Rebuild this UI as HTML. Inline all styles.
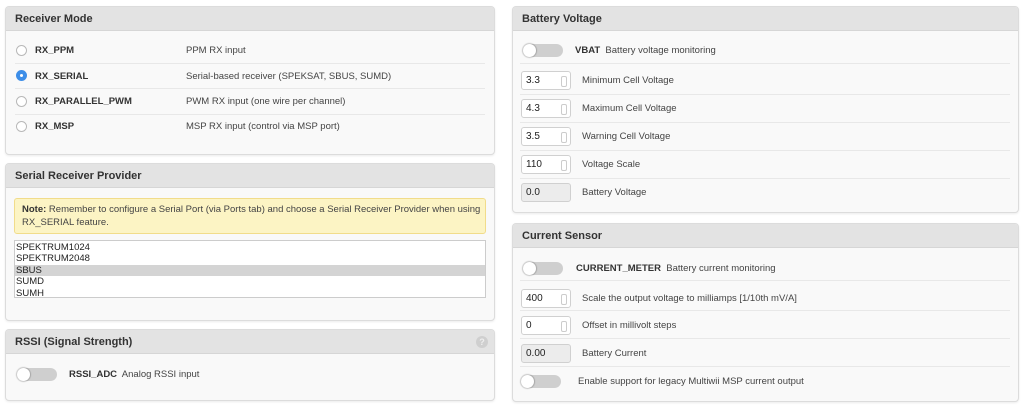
<!DOCTYPE html>
<html><head><meta charset="utf-8"><style>
*{box-sizing:border-box;margin:0;padding:0}
body{width:1024px;height:409px;background:#fff;font-family:"Liberation Sans",sans-serif;font-size:9.5px;color:#444;position:relative;overflow:hidden}
.a{position:absolute;white-space:nowrap}
.panel{position:absolute;background:#f9f9f9;border:1px solid #dcdcdc;border-radius:4px;box-shadow:0 1px 2px rgba(0,0,0,.08);overflow:hidden}
.hd{position:absolute;left:0;right:0;top:0;height:24px;background:#e3e3e3;border-bottom:1px solid #d6d6d6;font-weight:bold;font-size:11px;color:#333;padding:6px 0 0 9px}
.sep{position:absolute;height:1px;background:#e8e8e8}
.radio{position:absolute;width:11px;height:11px;border-radius:50%;border:1px solid #b8b8b8;background:#fff}
.radio.on{background:#3d8ee8;border-color:#3d8ee8}
.radio.on:after{content:"";position:absolute;left:3px;top:3px;width:3px;height:3px;border-radius:50%;background:#fff}
.b{font-weight:bold;color:#333;font-size:9.5px}
.tog{position:absolute;width:40px;height:13px;border-radius:7px;background:#cfcfcf}
.tog:after{content:"";position:absolute;left:0;top:0;width:13px;height:13px;border-radius:50%;background:#fff;box-shadow:0 0 1px 1px rgba(0,0,0,.2)}
.inp{position:absolute;width:50px;height:19px;border:1px solid #d0d0d0;border-radius:3px;background:#fff;padding:3px 0 0 4px;font-size:10px;color:#222}
.inp:after{content:"";position:absolute;right:3px;top:4px;width:4px;height:9px;border:1px solid #ccc;border-radius:2px}
.inp.ro{background:#ececec}
.inp.ro:after{display:none}
</style></head><body>

<div class="panel" style="left:5px;top:6px;width:490px;height:149px">
<div class="hd">Receiver Mode</div>
</div>
<div class="radio" style="left:16px;top:45px"></div><div class="a b" style="left:35px;top:45px">RX_PPM</div><div class="a" style="left:186px;top:45px">PPM RX input</div>
<div class="sep" style="left:15px;width:470px;top:63px"></div>
<div class="radio on" style="left:16px;top:70px"></div><div class="a b" style="left:35px;top:71px">RX_SERIAL</div><div class="a" style="left:186px;top:71px">Serial-based receiver (SPEKSAT, SBUS, SUMD)</div>
<div class="sep" style="left:15px;width:470px;top:88px"></div>
<div class="radio" style="left:16px;top:96px"></div><div class="a b" style="left:35px;top:96px">RX_PARALLEL_PWM</div><div class="a" style="left:186px;top:96px">PWM RX input (one wire per channel)</div>
<div class="sep" style="left:15px;width:470px;top:114px"></div>
<div class="radio" style="left:16px;top:121px"></div><div class="a b" style="left:35px;top:121px">RX_MSP</div><div class="a" style="left:186px;top:121px">MSP RX input (control via MSP port)</div>

<div class="panel" style="left:5px;top:163px;width:490px;height:158px">
<div class="hd">Serial Receiver Provider</div>
</div>
<div class="a" style="left:14px;top:198px;width:472px;height:36px;background:#fcf4c4;border:1px solid #f1dc8a;border-radius:3px;padding:5px 0 0 7px;line-height:12.5px;font-size:9.5px;color:#444;white-space:normal"><b style="color:#333">Note:</b> Remember to configure a Serial Port (via Ports tab) and choose a Serial Receiver Provider when using RX_SERIAL feature.</div>
<div class="a" style="left:14px;top:240px;width:472px;height:58px;background:#fff;border:1px solid #ccc;font-size:9.5px;color:#222;line-height:11.4px;padding-top:1px">
<div style="padding-left:1px">SPEKTRUM1024</div>
<div style="padding-left:1px">SPEKTRUM2048</div>
<div style="padding-left:1px;background:#d4d4d4">SBUS</div>
<div style="padding-left:1px">SUMD</div>
<div style="padding-left:1px">SUMH</div>
</div>

<div class="panel" style="left:5px;top:329px;width:490px;height:72px">
<div class="hd">RSSI (Signal Strength)</div>
</div>
<div class="a" style="left:476px;top:336px;width:12px;height:12px;border-radius:50%;background:#cfcfcf;color:#eee;font-size:9px;text-align:center;line-height:12px;font-weight:bold">?</div>
<div class="tog" style="left:17px;top:368px"></div>
<div class="a" style="left:69px;top:369px"><span class="b">RSSI_ADC</span>&nbsp; Analog RSSI input</div>

<div class="panel" style="left:512px;top:6px;width:507px;height:207px">
<div class="hd">Battery Voltage</div>
</div>
<div class="tog" style="left:523px;top:44px"></div>
<div class="a" style="left:575px;top:45px"><span class="b">VBAT</span>&nbsp; Battery voltage monitoring</div>
<div class="sep" style="left:520px;width:490px;top:63px"></div>
<div class="inp" style="left:521px;top:71px">3.3</div><div class="a" style="left:582px;top:75px">Minimum Cell Voltage</div>
<div class="sep" style="left:520px;width:490px;top:94px"></div>
<div class="inp" style="left:521px;top:99px">4.3</div><div class="a" style="left:582px;top:103px">Maximum Cell Voltage</div>
<div class="sep" style="left:520px;width:490px;top:122px"></div>
<div class="inp" style="left:521px;top:127px">3.5</div><div class="a" style="left:582px;top:131px">Warning Cell Voltage</div>
<div class="sep" style="left:520px;width:490px;top:150px"></div>
<div class="inp" style="left:521px;top:155px">110</div><div class="a" style="left:582px;top:159px">Voltage Scale</div>
<div class="sep" style="left:520px;width:490px;top:178px"></div>
<div class="inp ro" style="left:521px;top:183px">0.0</div><div class="a" style="left:582px;top:187px">Battery Voltage</div>

<div class="panel" style="left:512px;top:223px;width:507px;height:179px">
<div class="hd">Current Sensor</div>
</div>
<div class="tog" style="left:523px;top:262px"></div>
<div class="a" style="left:576px;top:263px"><span class="b">CURRENT_METER</span>&nbsp; Battery current monitoring</div>
<div class="sep" style="left:520px;width:490px;top:280px"></div>
<div class="inp" style="left:521px;top:289px">400</div><div class="a" style="left:582px;top:293px">Scale the output voltage to milliamps [1/10th mV/A]</div>
<div class="sep" style="left:520px;width:490px;top:310px"></div>
<div class="inp" style="left:521px;top:316px">0</div><div class="a" style="left:582px;top:320px">Offset in millivolt steps</div>
<div class="sep" style="left:520px;width:490px;top:338px"></div>
<div class="inp ro" style="left:521px;top:344px">0.00</div><div class="a" style="left:582px;top:348px">Battery Current</div>
<div class="sep" style="left:520px;width:490px;top:366px"></div>
<div class="tog" style="left:521px;top:375px"></div>
<div class="a" style="left:578px;top:376px">Enable support for legacy Multiwii MSP current output</div>

</body></html>
